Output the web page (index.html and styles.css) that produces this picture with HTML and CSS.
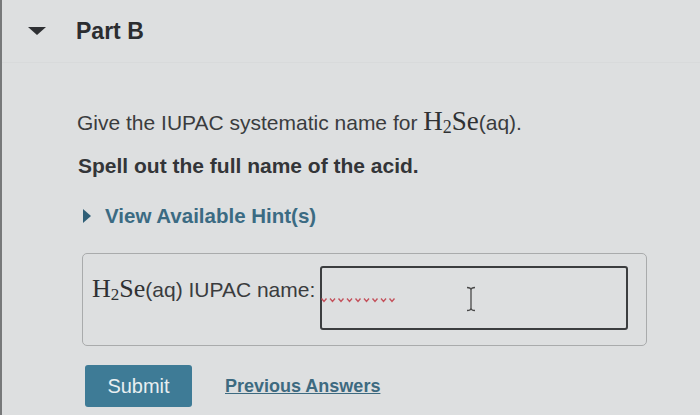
FILE: index.html
```html
<!DOCTYPE html>
<html lang="en">
<head>
    <meta charset="UTF-8">
    <title>Part B</title>
    <link rel="stylesheet" href="styles.css">
</head>
<body>
    <div class="part">
        <div class="part-header">
            <span class="caret-down"></span>
            <h2>Part B</h2>
        </div>

        <div class="part-body">
            <p class="question">Give the IUPAC systematic name for <span class="chem">H<sub>2</sub>Se</span>(aq).</p>
            <p class="instruction">Spell out the full name of the acid.</p>

            <div class="hint">
                <span class="caret-right"></span>
                <span class="hint-link">View Available Hint(s)</span>
            </div>

            <div class="answer-box">
                <label class="answer-label"><span class="chem">H<sub>2</sub>Se</span>(aq) IUPAC name:</label>
                <div class="answer-input">
                    <svg class="squiggle" width="78" height="6" viewBox="0 0 78 6">
                        <path d="M0.5 1.5 L3 4.5 L5.5 1.5 M9 1.5 L11.5 4.5 L14 1.5 M17.5 1.5 L20 4.5 L22.5 1.5 M26 1.5 L28.5 4.5 L31 1.5 M34.5 1.5 L37 4.5 L39.5 1.5 M43 1.5 L45.5 4.5 L48 1.5 M51.5 1.5 L54 4.5 L56.5 1.5 M60 1.5 L62.5 4.5 L65 1.5 M68.5 1.5 L71 4.5 L73.5 1.5" fill="none" stroke="#c4535d" stroke-width="1.4"/>
                    </svg>
                    <svg class="ibeam" width="12" height="26" viewBox="0 0 12 26">
                        <path d="M2 1.5 Q6 1.5 6 4 Q6 1.5 10 1.5 M6 4 V22 M2 24.5 Q6 24.5 6 22 Q6 24.5 10 24.5" fill="none" stroke="#4a4a4a" stroke-width="1.3"/>
                    </svg>
                </div>
            </div>

            <div class="actions">
                <button class="submit-btn">Submit</button>
                <a class="prev-link" href="#">Previous Answers</a>
            </div>
        </div>
    </div>
</body>
</html>
```

FILE: styles.css
```css
body {
    margin: 0;
    padding: 0;
    background-color: #dddfe0;
    font-family: 'Liberation Sans', Arial, sans-serif;
    color: #333;
}

.part {
    height: 415px;
    border-left: 2px solid #77797a;
    box-sizing: border-box;
    overflow: hidden;
}

.part-header {
    display: flex;
    align-items: center;
    height: 62px;
    border-bottom: 1px solid #d8dadb;
}

.caret-down {
    width: 0;
    height: 0;
    margin-left: 26px;
    margin-right: 30px;
    border-left: 9px solid transparent;
    border-right: 9px solid transparent;
    border-top: 8px solid #2e3033;
}

.part-header h2 {
    margin: 0;
    font-size: 23px;
    font-weight: bold;
    color: #2b2d30;
}

.part-body {
    padding: 43px 0 0 75px;
}

.question {
    margin: 0;
    font-size: 21px;
    line-height: 30px;
    color: #3a3c3e;
}

.chem {
    font-family: 'Liberation Serif', 'Times New Roman', serif;
    font-size: 27px;
    color: #2f3133;
}

.chem sub {
    font-size: 18px;
    line-height: 0;
    vertical-align: -3px;
}

.instruction {
    margin: 16px 0 0 1px;
    font-size: 21px;
    font-weight: bold;
    color: #333538;
}

.hint {
    display: flex;
    align-items: center;
    margin: 26px 0 0 6px;
}

.caret-right {
    width: 0;
    height: 0;
    border-top: 7px solid transparent;
    border-bottom: 7px solid transparent;
    border-left: 8px solid #2f5f77;
    margin-right: 14px;
}

.hint-link {
    font-size: 20.5px;
    font-weight: bold;
    color: #3b6b83;
}

.answer-box {
    display: flex;
    align-items: flex-start;
    width: 565px;
    height: 93px;
    margin: 25px 0 0 5px;
    padding: 12px 18px 0 9px;
    box-sizing: border-box;
    border: 1px solid #a9abac;
    border-radius: 5px;
}

.answer-label {
    padding-top: 8px;
    margin-right: 5px;
    font-size: 21px;
    color: #3a3c3e;
    white-space: nowrap;
}

.answer-label .chem {
    font-size: 26px;
}

.answer-label .chem sub {
    font-size: 17px;
}

.answer-input {
    position: relative;
    flex: 1;
    height: 64px;
    border: 2px solid #3b3d3f;
    border-radius: 3px;
    box-sizing: border-box;
}

.squiggle {
    position: absolute;
    left: -1px;
    top: 29px;
}

.ibeam {
    position: absolute;
    left: 143px;
    top: 18px;
}

.actions {
    display: flex;
    align-items: center;
    margin: 19px 0 0 8px;
}

.submit-btn {
    width: 107px;
    height: 42px;
    border: none;
    border-radius: 3px;
    background-color: #3e7b96;
    color: #e9eff1;
    font-family: 'Liberation Sans', Arial, sans-serif;
    font-size: 20px;
    cursor: pointer;
}

.prev-link {
    margin-left: 33px;
    font-size: 18px;
    font-weight: bold;
    color: #3d6a80;
    text-decoration: underline;
}
```
